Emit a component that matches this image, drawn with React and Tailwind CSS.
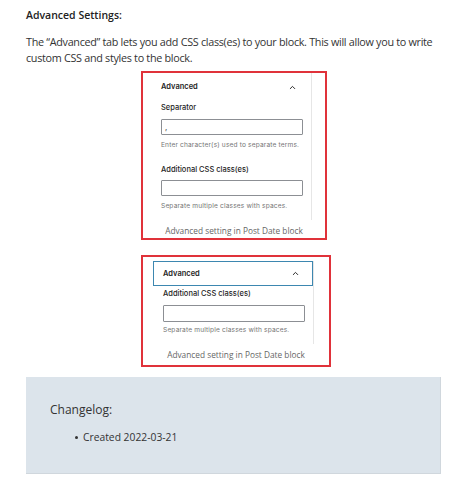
import React from "react";

const pageFont = { fontFamily: '"Open Sans", "Liberation Sans", sans-serif' };
const panelFont = { fontFamily: 'Inter, "Liberation Sans", sans-serif' };

function Chevron() {
    return (
        <svg width="9" height="9" viewBox="0 0 24 24" fill="none" stroke="#1e1e1e" strokeWidth="2.5" strokeLinecap="round" strokeLinejoin="round">
            <path d="M6 15l6-6 6 6" />
        </svg>
    );
}

function Field({ label, help, value, inputMt, labelMt }) {
    return (
        <div>
            <div className={`h-[12px] flex items-center text-[7.5px] font-medium text-[#1e1e1e] ${labelMt}`}>{label}</div>
            <div className={`h-[16px] border border-[#8c8f94] rounded-[1px] flex items-center px-[3px] text-[8px] leading-none ${inputMt}`}>
                {value}
            </div>
            <div className="h-[12px] mt-[5px] flex items-center text-[6.6px] tracking-[0.15px] text-[#757575]">{help}</div>
        </div>
    );
}

export default function App() {
    return (
        <div className="w-[474px] h-[499px] bg-white px-[26px] text-[#333]" style={pageFont}>
            {/* Intro */}
            <h3 className="pt-[7px] text-[10.5px] leading-[16px] font-semibold text-[#222]">Advanced Settings:</h3>
            <p className="mt-[11px] text-[10.8px] leading-[15.5px] tracking-[-0.3px] text-[#333]">
                The “Advanced” tab lets you add CSS class(es) to your block. This will allow you to write custom CSS and styles to the block.
            </p>

            {/* Figure 1 */}
            <div className="mt-[6px] ml-[115px] w-[186px] h-[169px] border-2 border-[#e0323a] flex flex-col">
                <div className="w-[169px] h-[147px] border-r border-[#e6e6e6] pl-[18px] pr-[8px] pt-[8px]" style={panelFont}>
                    <div className="h-[12px] flex items-center justify-between pr-[6px]">
                        <span className="text-[7.5px] font-semibold text-[#1e1e1e]">Advanced</span>
                        <Chevron />
                    </div>
                    <Field label="Separator" help="Enter character(s) used to separate terms." value="," labelMt="mt-[9px]" inputMt="mt-[5px]" />
                    <Field label="Additional CSS class(es)" help="Separate multiple classes with spaces." value="" labelMt="mt-[12px]" inputMt="mt-[4px]" />
                </div>
                <div className="h-[12px] mt-[5px] flex items-center justify-center text-[8.3px] text-[#666]">
                    Advanced setting in Post Date block
                </div>
            </div>

            {/* Figure 2 */}
            <div className="mt-[15px] ml-[115px] w-[190px] h-[112px] border-2 border-[#e0323a] pl-[10px] flex flex-col">
                <div className="w-[161px] h-[83px] border-r border-[#e6e6e6] mt-[4px]" style={panelFont}>
                    <div className="h-[25px] border-[1.5px] border-[#3d87b0] pl-[9px] pr-[12px] flex items-center justify-between">
                        <span className="text-[7.5px] font-semibold text-[#1e1e1e]">Advanced</span>
                        <Chevron />
                    </div>
                    <div className="pl-[10px] pr-[8px]">
                        <div className="h-[12px] mt-[2px] flex items-center text-[7.5px] font-medium text-[#1e1e1e]">Additional CSS class(es)</div>
                        <div className="h-[17px] mt-[5px] border border-[#8c8f94] rounded-[1px]" />
                        <div className="h-[12px] mt-[3px] flex items-center text-[6.6px] tracking-[0.15px] text-[#757575]">Separate multiple classes with spaces.</div>
                    </div>
                </div>
                <div className="h-[12px] mt-[5px] pr-[10px] flex items-center justify-center text-[8.3px] text-[#666]">
                    Advanced setting in Post Date block
                </div>
            </div>

            {/* Changelog */}
            <div className="mt-[10px] w-[415px] h-[97px] bg-[#dce4eb] border-r border-b border-[#d0d7dd] pl-[24px] pt-[24px]">
                <div className="text-[12px] leading-[18px] text-[#333]">Changelog:</div>
                <ul className="mt-[10px] pl-[25px] text-[10.3px] leading-[16px] text-[#333]">
                    <li className="flex items-center gap-[5px]">
                        <span className="w-[3px] h-[3px] rounded-full bg-[#333]" />
                        <span>Created 2022-03-21</span>
                    </li>
                </ul>
            </div>
        </div>
    );
}
